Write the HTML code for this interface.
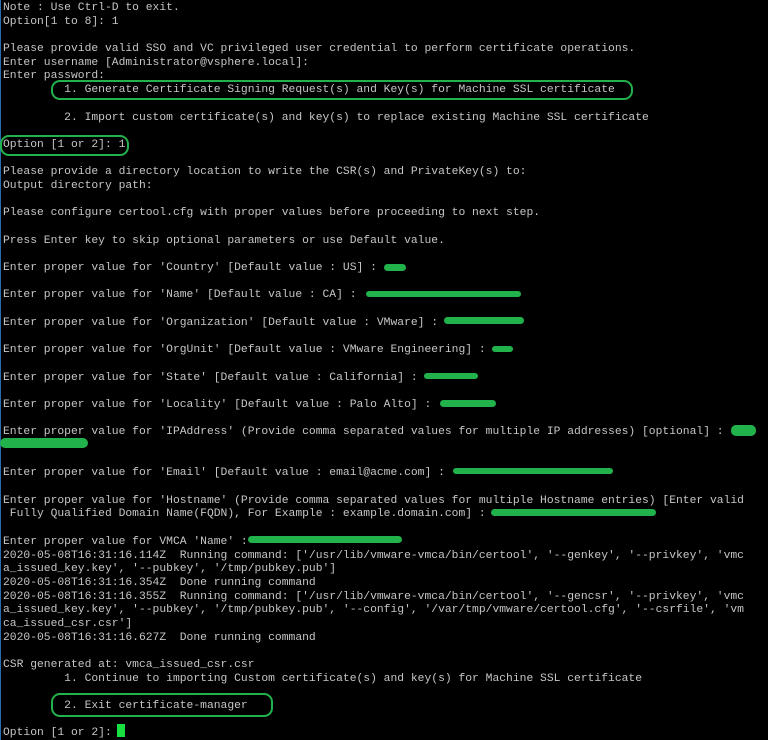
<!DOCTYPE html>
<html><head><meta charset="utf-8"><style>
html,body{margin:0;padding:0;background:#000;width:768px;height:740px;overflow:hidden;position:relative}
pre{position:absolute;left:3px;top:2px;margin:0;font-family:"Liberation Mono",monospace;font-size:11.33px;line-height:13.68px;color:#c6c6c6;white-space:pre}
.b{position:absolute;background:#22b24c;border-radius:5px}
.o{position:absolute;border:2px solid #22b24c;border-radius:9px}
.edge{position:absolute;left:0;top:0;width:1px;height:740px;background:#2b6cb0}
</style></head><body>
<div class="edge"></div>
<pre>Note : Use Ctrl-D to exit.
Option[1 to 8]: 1

Please provide valid SSO and VC privileged user credential to perform certificate operations.
Enter username [Administrator@vsphere.local]:
Enter password:
         1. Generate Certificate Signing Request(s) and Key(s) for Machine SSL certificate

         2. Import custom certificate(s) and key(s) to replace existing Machine SSL certificate

Option [1 or 2]: 1

Please provide a directory location to write the CSR(s) and PrivateKey(s) to:
Output directory path:

Please configure certool.cfg with proper values before proceeding to next step.

Press Enter key to skip optional parameters or use Default value.

Enter proper value for 'Country' [Default value : US] :

Enter proper value for 'Name' [Default value : CA] :

Enter proper value for 'Organization' [Default value : VMware] :

Enter proper value for 'OrgUnit' [Default value : VMware Engineering] :

Enter proper value for 'State' [Default value : California] :

Enter proper value for 'Locality' [Default value : Palo Alto] :

Enter proper value for 'IPAddress' (Provide comma separated values for multiple IP addresses) [optional] :


Enter proper value for 'Email' [Default value : email@acme.com] :

Enter proper value for 'Hostname' (Provide comma separated values for multiple Hostname entries) [Enter valid
 Fully Qualified Domain Name(FQDN), For Example : example.domain.com] :

Enter proper value for VMCA 'Name' :
2020-05-08T16:31:16.114Z  Running command: ['/usr/lib/vmware-vmca/bin/certool', '--genkey', '--privkey', 'vmc
a_issued_key.key', '--pubkey', '/tmp/pubkey.pub']
2020-05-08T16:31:16.354Z  Done running command
2020-05-08T16:31:16.355Z  Running command: ['/usr/lib/vmware-vmca/bin/certool', '--gencsr', '--privkey', 'vmc
a_issued_key.key', '--pubkey', '/tmp/pubkey.pub', '--config', '/var/tmp/vmware/certool.cfg', '--csrfile', 'vm
ca_issued_csr.csr']
2020-05-08T16:31:16.627Z  Done running command

CSR generated at: vmca_issued_csr.csr
         1. Continue to importing Custom certificate(s) and key(s) for Machine SSL certificate

         2. Exit certificate-manager

Option [1 or 2]: </pre>
<div class="o" style="left:51px;top:80px;width:578px;height:16px"></div>
<div class="o" style="left:0px;top:135px;width:125px;height:17px"></div>
<div class="o" style="left:51px;top:693px;width:218px;height:20px"></div>
<div class="b" style="left:384px;top:264px;width:22px;height:7px"></div>
<div class="b" style="left:366px;top:291px;width:155px;height:6px"></div>
<div class="b" style="left:444px;top:317px;width:80px;height:7px"></div>
<div class="b" style="left:492px;top:346px;width:21px;height:6px"></div>
<div class="b" style="left:424px;top:373px;width:54px;height:6px"></div>
<div class="b" style="left:440px;top:400px;width:56px;height:7px"></div>
<div class="b" style="left:731px;top:425px;width:25px;height:11px"></div>
<div class="b" style="left:0px;top:438px;width:88px;height:10px"></div>
<div class="b" style="left:453px;top:468px;width:160px;height:6px"></div>
<div class="b" style="left:491px;top:509px;width:165px;height:7px"></div>
<div class="b" style="left:248px;top:536px;width:154px;height:7px"></div>
<div style="position:absolute;left:117px;top:724px;width:8px;height:13px;background:#18e040"></div>
</body></html>
